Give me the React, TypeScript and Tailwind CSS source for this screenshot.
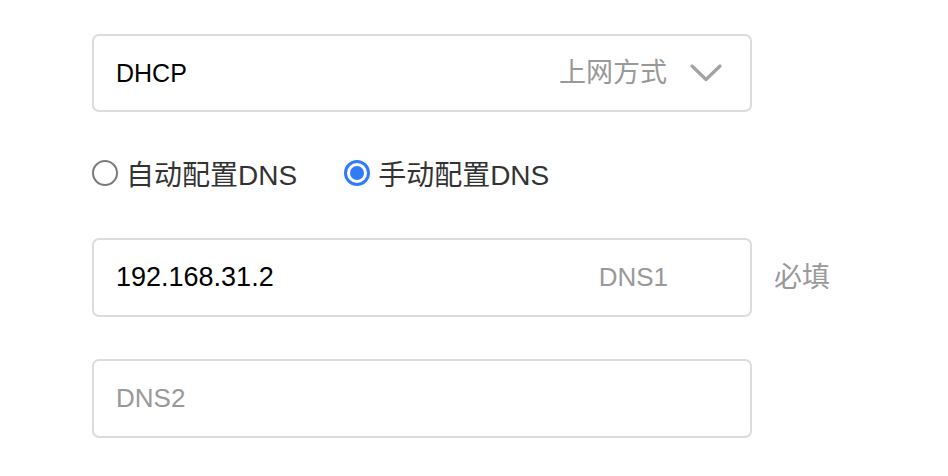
import React from "react";

const font = { fontFamily: '"Liberation Sans", "Noto Sans CJK SC", sans-serif' };

export default function App() {
  return (
    <div
      className="w-[948px] h-[476px] bg-white pl-[92px] pt-[34px]"
      style={font}
    >
      {/* 上网方式 select */}
      <div className="w-[660px] h-[78px] border-2 border-[#dcdcdc] rounded-[7px] flex items-center pl-[22px] pr-[28px]">
        <span className="text-[25px] text-black flex-1 mt-[2px]">DHCP</span>
        <span className="text-[27px] text-[#999999]">上网方式</span>
        <svg
          className="ml-[23px]"
          width="32"
          height="18"
          viewBox="0 0 32 18"
          fill="none"
        >
          <polyline
            points="2,2 16,15.5 30,2"
            stroke="#a3a3a3"
            strokeWidth="3.2"
            strokeLinecap="round"
            strokeLinejoin="round"
          />
        </svg>
      </div>

      {/* radio row */}
      <div className="mt-[48px] h-[26px] flex items-center">
        <label className="flex items-center">
          <span className="w-[26px] h-[26px] rounded-full border-2 border-[#7a7a7a] bg-white" />
          <span className="ml-[8px] text-[28px] text-[#333333] leading-none mt-[6px]">
            自动配置DNS
          </span>
        </label>
        <label className="flex items-center ml-[47px]">
          <span className="w-[26px] h-[26px] rounded-full border-[3px] border-[#2f7cf6] bg-white flex items-center justify-center">
            <span className="w-[14px] h-[14px] rounded-full bg-[#2f7cf6]" />
          </span>
          <span className="ml-[8px] text-[28px] text-[#333333] leading-none mt-[6px]">
            手动配置DNS
          </span>
        </label>
      </div>

      {/* DNS1 */}
      <div className="mt-[52px] flex items-center">
        <div className="w-[660px] h-[79px] border-2 border-[#dcdcdc] rounded-[7px] flex items-center pl-[22px] pr-[82px]">
          <span className="text-[27px] text-black flex-1">192.168.31.2</span>
          <span className="text-[26px] text-[#999999]">DNS1</span>
        </div>
        <span className="ml-[22px] text-[28px] text-[#999999]">必填</span>
      </div>

      {/* DNS2 */}
      <div className="mt-[42px] w-[660px] h-[79px] border-2 border-[#dcdcdc] rounded-[7px] flex items-center pl-[22px]">
        <span className="text-[26px] text-[#999999]">DNS2</span>
      </div>
    </div>
  );
}
